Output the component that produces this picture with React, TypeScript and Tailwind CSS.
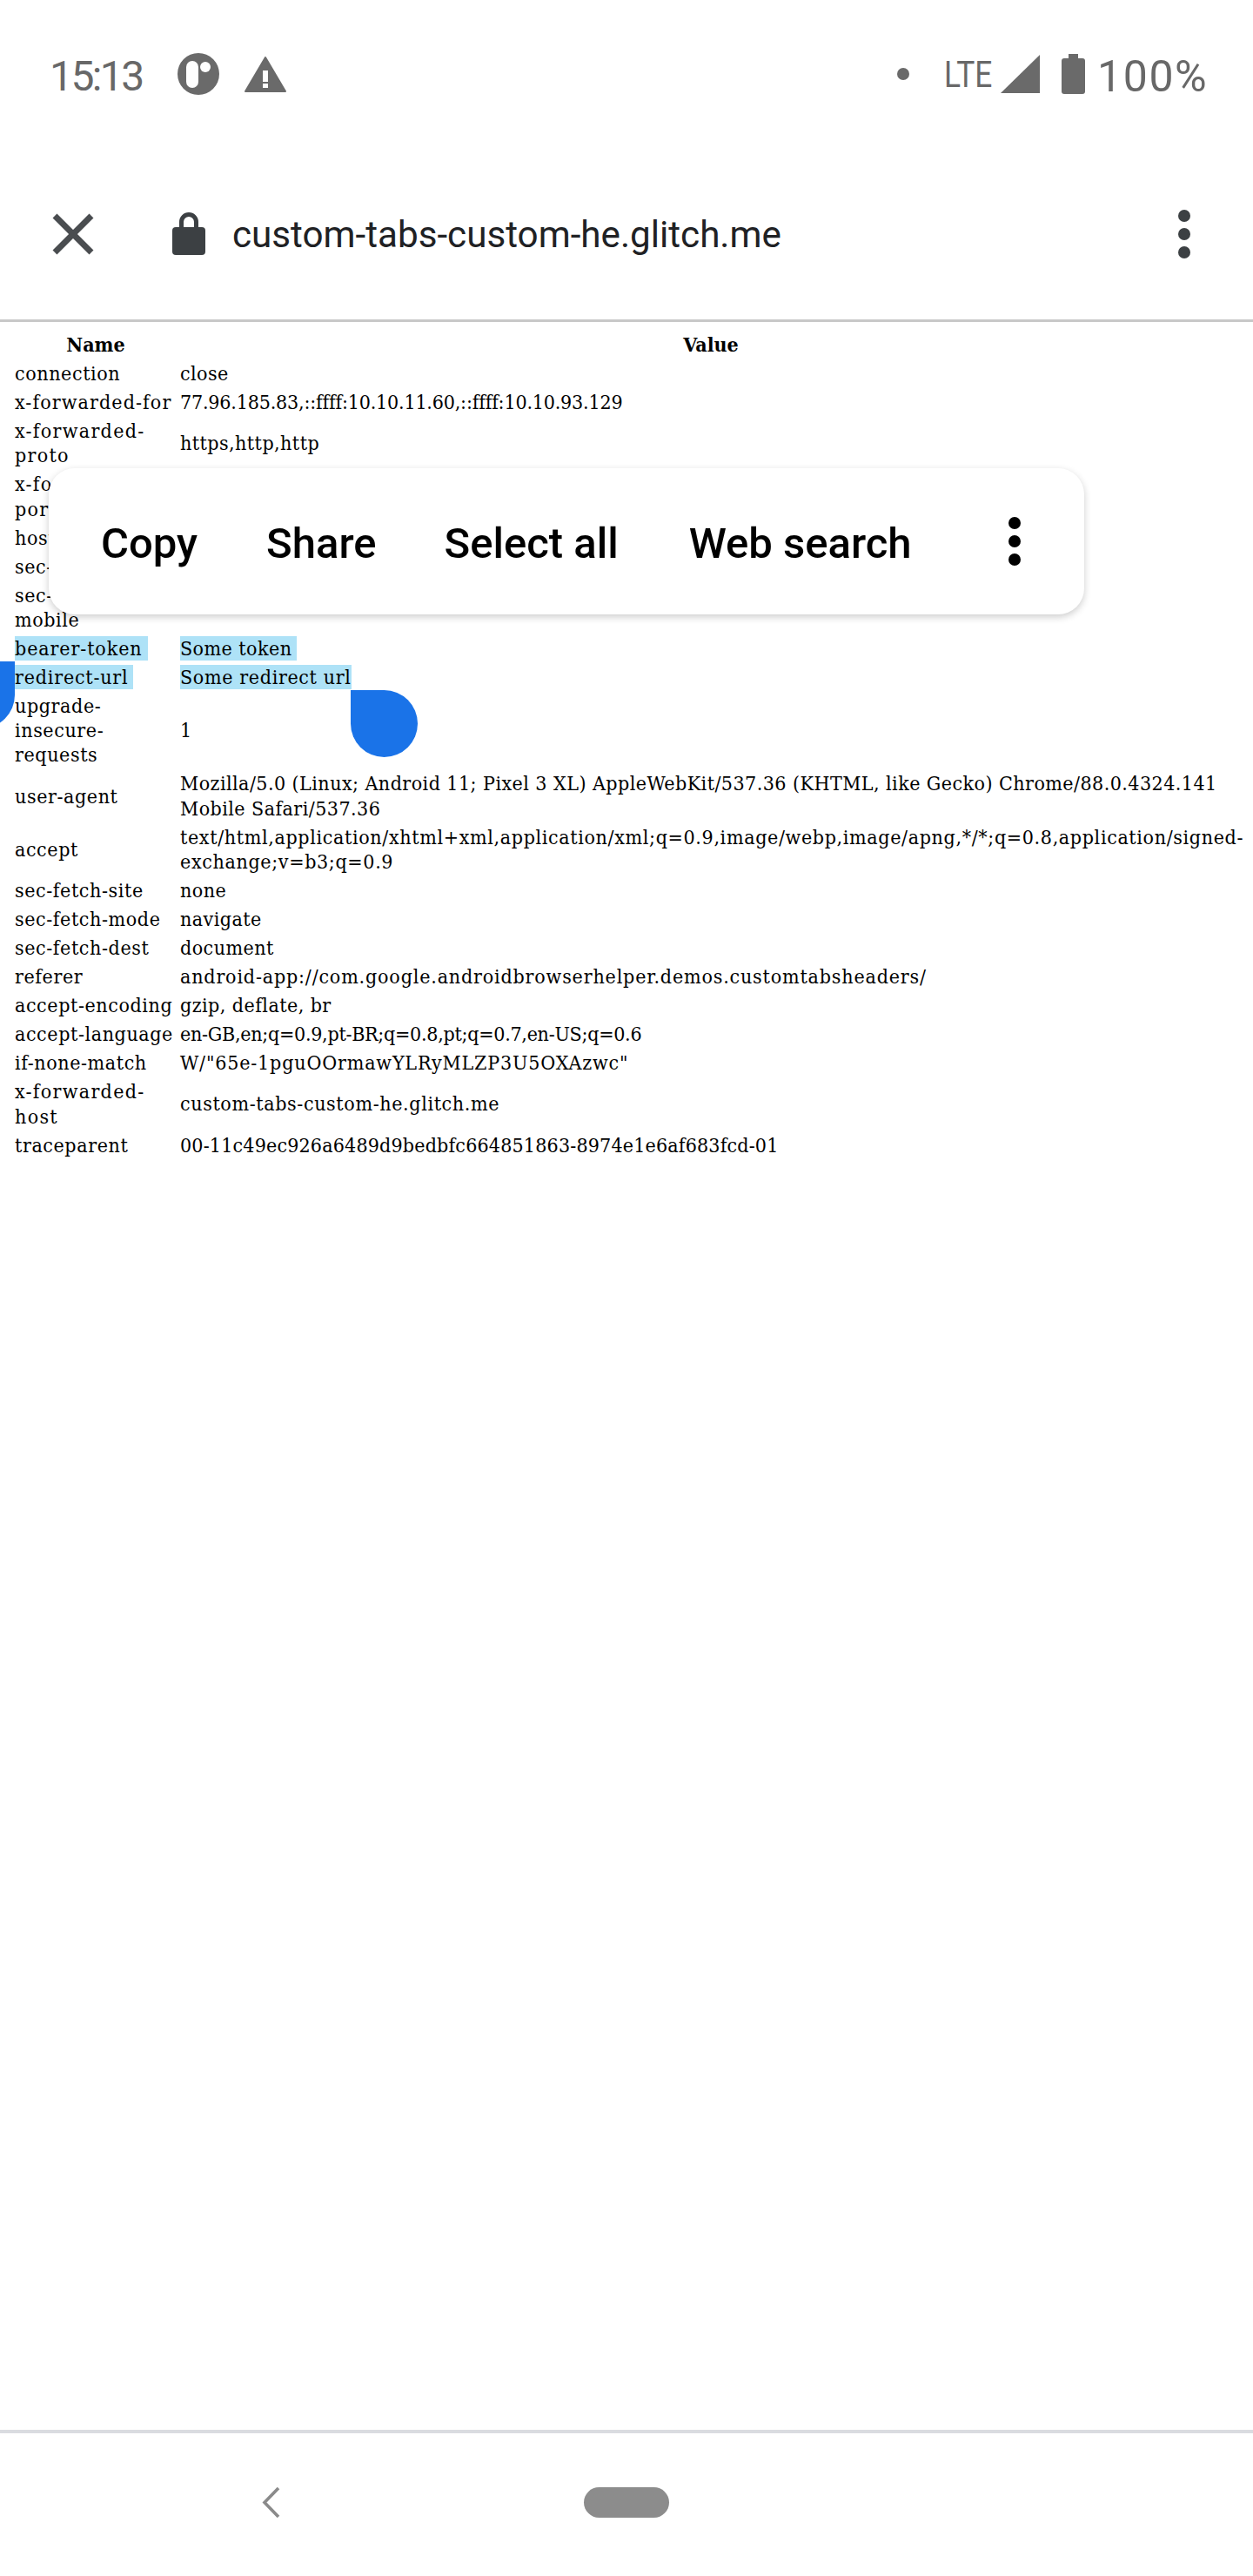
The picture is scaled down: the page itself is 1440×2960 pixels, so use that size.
import React from 'react';

interface Row {
  name: string[];
  value?: string[];
  selected?: boolean;
  valueSelectPad?: boolean;
  // the reference's serif is narrower on digits and wider on letters, so tracking is tuned per row
  nameClass?: string;
  valueClass?: string;
}

const rows: Row[] = [
  { name: ['connection'], value: ['close'] },
  {
    name: ['x-forwarded-for'],
    value: ['77.96.185.83,::ffff:10.10.11.60,::ffff:10.10.93.129'],
    nameClass: 'tracking-[1.1px]',
    valueClass: 'tracking-[-0.18px]',
  },
  { name: ['x-forwarded-', 'proto'], value: ['https,http,http'], nameClass: 'tracking-[1.3px]' },
  { name: ['x-forwarded-', 'port'], nameClass: 'tracking-[1.3px]' },
  { name: ['host'] },
  { name: ['sec-ch-ua'] },
  { name: ['sec-ch-ua-', 'mobile'], value: ['?1'] },
  {
    name: ['bearer-token'],
    value: ['Some token'],
    selected: true,
    valueSelectPad: true,
    nameClass: 'tracking-[0.9px]',
  },
  {
    name: ['redirect-url'],
    value: ['Some redirect url'],
    selected: true,
    nameClass: 'tracking-[0.8px]',
    valueClass: 'tracking-[0.65px]',
  },
  { name: ['upgrade-', 'insecure-', 'requests'], value: ['1'] },
  {
    name: ['user-agent'],
    value: [
      'Mozilla/5.0 (Linux; Android 11; Pixel 3 XL) AppleWebKit/537.36 (KHTML, like Gecko) Chrome/88.0.4324.141',
      'Mobile Safari/537.36',
    ],
  },
  {
    name: ['accept'],
    value: [
      'text/html,application/xhtml+xml,application/xml;q=0.9,image/webp,image/apng,*/*;q=0.8,application/signed-',
      'exchange;v=b3;q=0.9',
    ],
    valueClass: 'tracking-[0.65px]',
  },
  { name: ['sec-fetch-site'], value: ['none'] },
  { name: ['sec-fetch-mode'], value: ['navigate'] },
  { name: ['sec-fetch-dest'], value: ['document'] },
  {
    name: ['referer'],
    value: ['android-app://com.google.androidbrowserhelper.demos.customtabsheaders/'],
    valueClass: 'tracking-[0.83px]',
  },
  { name: ['accept-encoding'], value: ['gzip, deflate, br'] },
  {
    name: ['accept-language'],
    value: ['en-GB,en;q=0.9,pt-BR;q=0.8,pt;q=0.7,en-US;q=0.6'],
    valueClass: 'tracking-[-0.27px]',
  },
  { name: ['if-none-match'], value: ['W/"65e-1pguOOrmawYLRyMLZP3U5OXAzwc"'], valueClass: 'tracking-[0.83px]' },
  {
    name: ['x-forwarded-', 'host'],
    value: ['custom-tabs-custom-he.glitch.me'],
    nameClass: 'tracking-[1.3px]',
    valueClass: 'tracking-[0.63px]',
  },
  {
    name: ['traceparent'],
    value: ['00-11c49ec926a6489d9bedbfc664851863-8974e1e6af683fcd-01'],
    valueClass: 'tracking-[0.18px]',
  },
];

function Lines({ lines }: { lines: string[] }) {
  return (
    <>
      {lines.map((line) => (
        <div key={line}>{line}</div>
      ))}
    </>
  );
}

function StatusBar() {
  return (
    <div className="flex h-[170px] items-center pl-[57px] pr-[54px] font-['Roboto',sans-serif] text-[#686868]">
      <span className="mt-[5px] w-[105px] whitespace-nowrap text-[48px] leading-none tracking-[-2.6px]">15:13</span>
      <svg className="ml-[42px]" width="48" height="48" viewBox="0 0 48 48">
        <circle cx="24" cy="24" r="24" fill="#6a6a6a" />
        <rect x="10" y="9" width="14" height="31" rx="7" fill="#fff" />
        <circle cx="32" cy="16" r="6" fill="#fff" />
      </svg>
      <svg className="ml-[29px]" width="48" height="41" viewBox="0 0 48 41">
        <path d="M24 1 L47 40 L1 40 Z" fill="#6a6a6a" stroke="#6a6a6a" strokeWidth="2" strokeLinejoin="round" />
        <rect x="21" y="16" width="6" height="13" fill="#fff" />
        <rect x="21" y="31" width="6" height="5" fill="#fff" />
      </svg>
      <span className="ml-auto h-[14px] w-[14px] rounded-full bg-[#6a6a6a]" />
      <span className="ml-[40px] w-[57px] origin-left scale-x-[0.82] whitespace-nowrap text-[43px] leading-none">LTE</span>
      <svg className="ml-[8px]" width="45" height="44" viewBox="0 0 45 44">
        <path d="M45 0 V44 H0 Z" fill="#6a6a6a" />
      </svg>
      <svg className="ml-[25px]" width="27" height="46" viewBox="0 0 27 46">
        <rect x="8" y="0" width="11" height="8" fill="#6a6a6a" />
        <rect x="0" y="5" width="27" height="41" rx="3" fill="#6a6a6a" />
      </svg>
      <span className="ml-[14px] mt-[5px] w-[125px] whitespace-nowrap text-[50px] leading-none tracking-[1.6px]">100%</span>
    </div>
  );
}

function Toolbar() {
  return (
    <div className="flex h-[197px] items-center pl-[60px] pr-[72px]">
      <svg width="48" height="48" viewBox="0 0 48 48">
        <path d="M3 3 L45 45 M45 3 L3 45" stroke="#4a4d50" strokeWidth="7" fill="none" />
      </svg>
      <svg className="ml-[90px]" width="38" height="49" viewBox="0 0 38 49">
        <rect x="0" y="17" width="38" height="32" rx="4" fill="#3c4043" />
        <path d="M10.5 18 V11 a8.5 8.5 0 0 1 17 0 V18" stroke="#3c4043" strokeWidth="5" fill="none" />
      </svg>
      <span className="ml-[31px] mt-[3px] whitespace-nowrap font-['Roboto',sans-serif] text-[42.2px] leading-none text-[#202124]">
        custom-tabs-custom-he.glitch.me
      </span>
      <div className="ml-auto flex flex-col gap-[7px]">
        <span className="h-[14px] w-[14px] rounded-full bg-[#3c4043]" />
        <span className="h-[14px] w-[14px] rounded-full bg-[#3c4043]" />
        <span className="h-[14px] w-[14px] rounded-full bg-[#3c4043]" />
      </div>
    </div>
  );
}

function HeadersTable() {
  return (
    <div className="pl-[14px] pr-[10px] pt-[8.5px]">
      <table className="w-full table-fixed border-separate border-spacing-[2px] font-['DejaVu_Serif_Condensed','DejaVu_Serif',serif] text-[23px] leading-[28.25px] text-black">
        <thead>
          <tr>
            <th className="w-[188px] px-[1px] py-[1.4px] text-center font-bold">Name</th>
            <th className="px-[1px] py-[1.4px] text-center font-bold">Value</th>
          </tr>
        </thead>
        <tbody>
          {rows.map((row) => (
            <tr key={row.name.join('')}>
              <td className={`whitespace-nowrap px-[1px] py-[1.4px] ${row.nameClass ?? 'tracking-[0.6px]'}`}>
                {row.selected ? (
                  <span className="inline-block bg-[#aee2f7] pr-[6px] align-top">{row.name[0]}</span>
                ) : (
                  <Lines lines={row.name} />
                )}
              </td>
              <td className={`whitespace-nowrap px-[1px] py-[1.4px] ${row.valueClass ?? 'tracking-[0.45px]'}`}>
                {row.selected ? (
                  <span className={`inline-block bg-[#aee2f7] align-top ${row.valueSelectPad ? 'pr-[6px]' : ''}`}>
                    {row.value?.[0]}
                  </span>
                ) : (
                  <Lines lines={row.value ?? []} />
                )}
              </td>
            </tr>
          ))}
        </tbody>
      </table>
    </div>
  );
}

function SelectionMenu() {
  return (
    <div className="absolute left-[56px] top-[538px] flex h-[168px] w-[1190px] items-center rounded-[30px] bg-white pl-[60px] pr-[73px] font-['Roboto',sans-serif] text-[49px] font-medium text-black shadow-[0_3px_8px_rgba(0,0,0,0.2)]">
      <span className="mt-[6px] whitespace-nowrap">Copy</span>
      <span className="ml-[79px] mt-[6px] whitespace-nowrap">Share</span>
      <span className="ml-[78px] mt-[6px] whitespace-nowrap">Select all</span>
      <span className="ml-[81px] mt-[6px] whitespace-nowrap">Web search</span>
      <div className="ml-auto flex flex-col gap-[7px]">
        <span className="h-[14px] w-[14px] rounded-full bg-black" />
        <span className="h-[14px] w-[14px] rounded-full bg-black" />
        <span className="h-[14px] w-[14px] rounded-full bg-black" />
      </div>
    </div>
  );
}

export default function App() {
  return (
    <div className="relative flex h-[2960px] w-[1440px] flex-col overflow-hidden bg-white">
      <StatusBar />
      <Toolbar />
      <div className="h-[3px] bg-[#c8c8c8]" />
      <div className="flex-1">
        <HeadersTable />
      </div>
      <div className="flex h-[168px] items-center border-t-[4px] border-[#dadce0] pb-[6px] pl-[301px]">
        <svg width="21" height="35" viewBox="0 0 21 35">
          <path d="M19 1 L3 17.5 L19 34" stroke="#8a8a8a" strokeWidth="3.6" fill="none" />
        </svg>
        <span className="ml-[349px] h-[35px] w-[98px] rounded-full bg-[#8c8c8c]" />
      </div>

      {/* text selection handles + floating menu */}
      <div className="absolute left-[-60px] top-[760px] h-[77px] w-[77px] rounded-full rounded-tr-none bg-[#1a73e8]" />
      <div className="absolute left-[403px] top-[793px] h-[77px] w-[77px] rounded-full rounded-tl-none bg-[#1a73e8]" />
      <SelectionMenu />
    </div>
  );
}
